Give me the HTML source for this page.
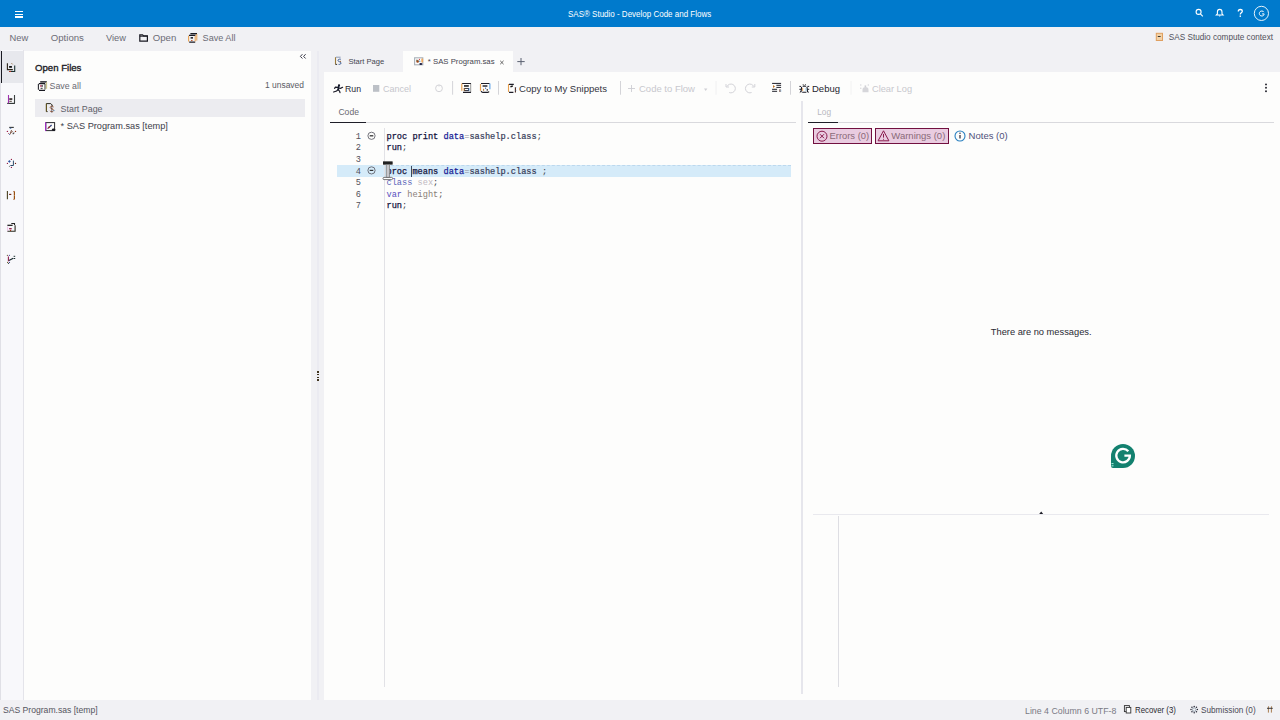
<!DOCTYPE html>
<html><head><meta charset="utf-8">
<style>
*{margin:0;padding:0;box-sizing:border-box}
html,body{width:1280px;height:720px;overflow:hidden;background:#f1f1f4;font-family:"Liberation Sans",sans-serif;color:#444}
.a{position:absolute;white-space:nowrap;line-height:1}
.b{position:absolute}
svg.i{position:absolute;overflow:visible}
.code{position:absolute;left:386.5px;top:131.9px;font-family:"Liberation Mono",monospace;font-size:8.65px;line-height:11.56px;white-space:pre;color:#1c1c58}
.ln{position:absolute;left:330px;width:31px;text-align:right;top:131.9px;font-family:"Liberation Mono",monospace;font-size:8.65px;line-height:11.56px;white-space:pre;color:#50505a}
.k{color:#14143e;-webkit-text-stroke:0.25px #14143e}
.d{color:#1a1e96;-webkit-text-stroke:0.25px #1a1e96}
.e{color:#8a8a9a}
.sc{color:#3a3a48}
.s{color:#353a58;-webkit-text-stroke:0.2px #353a58}
</style></head><body>
<!-- ===== header ===== -->
<div class="b" style="left:0;top:0;width:1280px;height:26.5px;background:#007acc"></div>
<div class="b" style="left:15px;top:10.8px;width:8px;height:1.4px;background:#fff"></div>
<div class="b" style="left:15px;top:13.5px;width:8px;height:1.4px;background:#fff"></div>
<div class="b" style="left:15px;top:16.2px;width:8px;height:1.4px;background:#fff"></div>
<div class="a" style="left:568px;top:10px;font-size:8.6px;color:#fff;transform:scaleX(0.93);transform-origin:0 0">SAS® Studio - Develop Code and Flows</div>
<svg class="i" style="left:0;top:0" width="1280" height="27">
  <circle cx="1198.6" cy="11.9" r="2.5" fill="none" stroke="#fff" stroke-width="1.1"/>
  <line x1="1200.4" y1="13.8" x2="1202.8" y2="16.3" stroke="#fff" stroke-width="1.1"/>
  <path d="M1219.7 9.4c-1.5 0-2.3 1.2-2.3 2.6v1.8l-1.1 1.2h6.8l-1.1-1.2v-1.8c0-1.4-0.8-2.6-2.3-2.6z" fill="none" stroke="#fff" stroke-width="1.1"/>
  <path d="M1218.6 15.4h2.2l-1.1 1.3z" fill="#fff"/>
  <path d="M1238.3 11.5c0-1.3 0.9-2 2-2s2 0.7 2 1.8c0 1.5-2 1.6-2 3.2" fill="none" stroke="#fff" stroke-width="1.3"/>
  <rect x="1239.6" y="15.5" width="1.4" height="1.4" fill="#fff"/>
  <circle cx="1261.4" cy="13.4" r="7.1" fill="none" stroke="#fff" stroke-width="0.9"/>
  <path d="M1263.9 12.1c-0.4-0.7-1.1-1.1-2-1.1-1.5 0-2.6 1-2.6 2.5s1.1 2.5 2.6 2.5c1.3 0 2.2-0.8 2.2-2.1h-2" fill="none" stroke="#fff" stroke-width="0.95"/>
</svg>

<!-- ===== app toolbar ===== -->
<div class="a" style="left:9.6px;top:33.1px;font-size:9.4px;color:#6c6c76">New</div>
<div class="a" style="left:50.8px;top:33.1px;font-size:9.6px;color:#6c6c76">Options</div>
<div class="a" style="left:106px;top:33.9px;font-size:9.3px;color:#6c6c76">View</div>
<div class="a" style="left:152.8px;top:33.1px;font-size:9.6px;color:#6c6c76">Open</div>
<div class="a" style="left:202.6px;top:34px;font-size:9.1px;color:#6c6c76">Save All</div>
<div class="a" style="left:1168.8px;top:34px;font-size:8.2px;color:#50505a">SAS Studio compute context</div>
<svg class="i" style="left:0;top:0" width="1280" height="50">
  <!-- folder -->
  <path d="M139.8 34.8h2.8l1 1h3.8v5.4h-7.6z" fill="none" stroke="#1a1a22" stroke-width="1.2"/>
  <line x1="139.8" y1="36.2" x2="147.4" y2="36.2" stroke="#1a1a22" stroke-width="1"/>
  <!-- save all -->
  <rect x="190.4" y="33" width="6.6" height="1.4" fill="#1a1a22"/>
  <line x1="196.8" y1="34" x2="196.8" y2="40.6" stroke="#e8a050" stroke-width="1"/>
  <path d="M189 35.4h6.4M189.2 42.2h6" stroke="#1a1a22" stroke-width="1.2"/>
  <line x1="188.6" y1="35.8" x2="188.6" y2="41.6" stroke="#e8a050" stroke-width="1.1"/>
  <line x1="195.2" y1="35.8" x2="195.2" y2="41.4" stroke="#e8a050" stroke-width="1"/>
  <rect x="190.6" y="37.1" width="2.4" height="1.5" fill="#1a1a22"/>
  <rect x="191.1" y="40" width="1.4" height="1" fill="#c05020"/>
  <!-- compute context -->
  <rect x="1156.3" y="33.3" width="6.2" height="7.2" fill="#f3d2a6" stroke="#e0a060" stroke-width="1"/>
  <line x1="1157.8" y1="36.5" x2="1160.6" y2="36.5" stroke="#333" stroke-width="1"/>
</svg>

<!-- ===== activity bar ===== -->
<div class="b" style="left:0;top:50px;width:23.5px;height:650px;background:#f8f8fb;border-right:1px solid #e4e4ea"></div>
<div class="b" style="left:0;top:50px;width:1px;height:650px;background:#e0e0e6"></div>
<div class="b" style="left:2px;top:51px;width:21px;height:32px;background:#e7e8ed"></div>
<div class="b" style="left:1px;top:51px;width:1.2px;height:32px;background:#1a1a22"></div>
<svg class="i" style="left:0;top:0" width="24" height="280">
  <!-- 1 open files -->
  <path d="M7.4 63.2v6.4h5.4" fill="none" stroke="#2a2418" stroke-width="1.1"/>
  <rect x="9.1" y="66" width="2.8" height="1.8" fill="#111"/>
  <path d="M11.6 63.3l1 1" stroke="#8a6030" stroke-width="1"/>
  <path d="M14.7 65.6v5.9H9.1" fill="none" stroke="#1a3030" stroke-width="1.1"/>
  <line x1="9.1" y1="71.5" x2="11" y2="71.5" stroke="#b03020" stroke-width="1.1"/>
  <!-- 2 -->
  <path d="M7.2 103.4h7.7" stroke="#2a3030" stroke-width="1.1"/>
  <line x1="8.5" y1="95" x2="8.5" y2="103.4" stroke="#a030b0" stroke-width="1.1"/>
  <line x1="14.5" y1="95" x2="14.5" y2="103.4" stroke="#3a4040" stroke-width="1.1"/>
  <rect x="9.3" y="98.3" width="3" height="1.5" fill="#1a1010"/>
  <line x1="9.3" y1="101.3" x2="11.8" y2="101.3" stroke="#3a2a20" stroke-width="0.9"/>
  <!-- 3 -->
  <path d="M9.2 127.4h4.6" stroke="#333" stroke-width="1.1"/>
  <path d="M9.8 128.5l1.6-0.4" stroke="#3a6ab0" stroke-width="0.9"/>
  <path d="M10 134.4l1.4-4 1 1.4-1 1" fill="none" stroke="#7a5040" stroke-width="1"/>
  <path d="M12.7 134.2l1.6-1.6" stroke="#444" stroke-width="1.1"/>
  <circle cx="7.4" cy="131.4" r="0.7" fill="#9a1a4a"/>
  <circle cx="15.5" cy="131.4" r="0.7" fill="#8a2a10"/>
  <circle cx="8.5" cy="133.4" r="0.5" fill="#a04050"/>
  <circle cx="9.5" cy="134.4" r="0.5" fill="#4060a0"/>
  <!-- 4 -->
  <circle cx="11.4" cy="159.4" r="0.65" fill="#901a40"/>
  <circle cx="7.4" cy="163.4" r="0.65" fill="#901a40"/>
  <circle cx="15.5" cy="163.4" r="0.65" fill="#7a2010"/>
  <circle cx="11.4" cy="167.4" r="0.65" fill="#901a40"/>
  <path d="M8.2 161.4h2.4M9.4 160.3v2.3" stroke="#2a50a0" stroke-width="1"/>
  <path d="M13.4 160.6v4.9H10.4" fill="none" stroke="#2a4a6a" stroke-width="1"/>
  <circle cx="9.4" cy="166.2" r="0.5" fill="#506050"/>
  <!-- 5 -->
  <line x1="7.4" y1="191" x2="7.4" y2="199.2" stroke="#4a4020" stroke-width="1.1"/>
  <line x1="9.1" y1="194.4" x2="11.3" y2="194.4" stroke="#6a2010" stroke-width="1.1"/>
  <path d="M13.6 191.2l0.8 0.8v3.2M13.6 199.6l0.8-0.8v-3.2" fill="none" stroke="#9a5010" stroke-width="1.2"/>
  <!-- 6 -->
  <path d="M7.4 225.3h5.2" stroke="#111" stroke-width="1.2"/>
  <path d="M11.3 223.5h3.2v1.6" fill="none" stroke="#222" stroke-width="1.1"/>
  <path d="M15.1 225.2v6h-7.7" fill="none" stroke="#2a2a20" stroke-width="1.1"/>
  <line x1="7.6" y1="226.5" x2="7.6" y2="231" stroke="#e8b0e0" stroke-width="0.8"/>
  <rect x="9.1" y="228.1" width="2.6" height="1.2" fill="#8a1040"/>
  <circle cx="10.6" cy="230.4" r="0.6" fill="#a03010"/>
  <!-- 7 -->
  <path d="M8.4 256.5v4.8" stroke="#902050" stroke-width="1.1"/>
  <path d="M9 260.6l4.2-2.4" stroke="#1a2a30" stroke-width="1.1"/>
  <circle cx="7.4" cy="255.3" r="0.65" fill="#6a5a30"/>
  <circle cx="9.4" cy="255.3" r="0.65" fill="#5040a0"/>
  <circle cx="7.6" cy="262.4" r="0.6" fill="#6a5a30"/>
  <circle cx="9.5" cy="262.4" r="0.6" fill="#5040a0"/>
  <circle cx="8.5" cy="263.5" r="0.6" fill="#204030"/>
  <path d="M13.6 256.3h1.6M13.6 258.5h1.6" stroke="#1a3030" stroke-width="1"/>
</svg>

<!-- ===== left panel ===== -->
<div class="b" style="left:24px;top:51px;width:287px;height:649px;background:#fdfdfc"></div>
<div class="a" style="left:35px;top:62.6px;font-size:9.6px;color:#1e1e28;-webkit-text-stroke:0.35px #1e1e28">Open Files</div>
<div class="a" style="left:49.6px;top:82.4px;font-size:8.8px;color:#6a6a72">Save all</div>
<div class="a" style="left:265px;top:81.3px;font-size:8.45px;color:#5a5a64">1 unsaved</div>
<div class="b" style="left:35px;top:99.4px;width:270px;height:17.5px;background:#ececf0"></div>
<div class="a" style="left:60.6px;top:104.7px;font-size:8.9px;color:#60606a">Start Page</div>
<div class="a" style="left:60.6px;top:122.4px;font-size:9.2px;color:#3c3c48">* SAS Program.sas [temp]</div>
<svg class="i" style="left:0;top:0" width="320" height="140">
  <path d="M302.4 54.2L300.4 56.4L302.4 58.5M305.6 54.2L303.6 56.4L305.6 58.5" fill="none" stroke="#3a3a48" stroke-width="1"/>
  <!-- save all -->
  <g transform="translate(-150.2,48.2)"><rect x="190.4" y="33" width="6.6" height="1.4" fill="#1a1a22"/>
  <line x1="196.8" y1="34" x2="196.8" y2="40.6" stroke="#c8c080" stroke-width="1"/>
  <path d="M189 35.4h6.4M189.2 42.2h6" stroke="#1a1a22" stroke-width="1.2"/>
  <line x1="188.6" y1="35.8" x2="188.6" y2="41.6" stroke="#2a2a30" stroke-width="1.1"/>
  <line x1="195.2" y1="35.8" x2="195.2" y2="41.4" stroke="#3a3a30" stroke-width="1"/>
  <rect x="190.4" y="37" width="1.4" height="1.5" fill="#b01040"/><rect x="191.8" y="37" width="1.2" height="1.5" fill="#1a1a22"/>
  <rect x="190.8" y="39.6" width="2" height="1" fill="#2a2a30"/></g>
  <!-- start page icon -->
  <path d="M47.6 111.6h-1.2v-8h4.4l1.4 1.4v1" fill="none" stroke="#2a2a20" stroke-width="1"/>
  <line x1="46.4" y1="103.6" x2="46.4" y2="111.6" stroke="#6a5a20" stroke-width="1"/>
  <path d="M53.6 107c-0.4-0.5-1-0.8-1.8-0.8-1 0-1.6 0.6-1.6 1.3 0 1.6 3.4 1 3.4 2.8 0 0.8-0.7 1.4-1.8 1.4-0.8 0-1.5-0.3-1.9-0.9" fill="none" stroke="#a05a30" stroke-width="1"/>
  <line x1="51.8" y1="105.6" x2="51.8" y2="112.6" stroke="#3a3040" stroke-width="0.7"/>
  <circle cx="54" cy="110.6" r="0.6" fill="#50a0e0"/>
  <!-- sas program icon -->
  <rect x="45.8" y="122.6" width="8.8" height="8" fill="none" stroke="#2a2a30" stroke-width="1"/>
  <line x1="45.6" y1="122.2" x2="45.6" y2="131" stroke="#a030c0" stroke-width="1.2"/>
  <path d="M47.6 128.6l4-3.6" stroke="#3a2a50" stroke-width="1.1"/>
  <circle cx="49" cy="127.4" r="0.8" fill="#b03030"/>
  <circle cx="51" cy="125.6" r="0.7" fill="#4070c0"/>
  <ellipse cx="53.6" cy="129.8" rx="1.8" ry="1.2" fill="#1a1a22"/>
</svg>

<!-- ===== splitter ===== -->
<div class="b" style="left:311px;top:51px;width:13px;height:649px;background:#f1f1f4"></div>
<div class="b" style="left:317px;top:51px;width:2px;height:649px;background:#ebebf1"></div>
<div class="b" style="left:317.2px;top:371.2px;width:1.8px;height:2px;background:#40341e"></div>
<div class="b" style="left:317.2px;top:374.2px;width:1.8px;height:1.2px;background:#40341e"></div>
<div class="b" style="left:317.2px;top:376.8px;width:1.8px;height:1.2px;background:#40341e"></div>
<div class="b" style="left:317.2px;top:379.2px;width:1.8px;height:2px;background:#40341e"></div>

<!-- ===== main tabs ===== -->
<div class="b" style="left:403px;top:51.2px;width:110px;height:21px;background:#fdfdfc"></div>
<div class="a" style="left:348.4px;top:57.6px;font-size:7.6px;color:#45454f">Start Page</div>
<div class="a" style="left:427.8px;top:58.2px;font-size:7.75px;color:#45454f">* SAS Program.sas</div>
<svg class="i" style="left:0;top:0" width="540" height="72">
  <path d="M335.5 57.2v7.2" stroke="#9a7a3a" stroke-width="1.1"/>
  <path d="M336 57.2h4.6" stroke="#8090b0" stroke-width="0.9"/>
  <path d="M335.5 64.4h1.6" stroke="#333" stroke-width="1"/>
  <path d="M340.8 59.2h-1.4c-0.8 0-1.4 0.6-1.4 1.3 0 1.5 3 1 3 2.6 0 0.7-0.6 1.3-1.4 1.3h-1" fill="none" stroke="#3a5a90" stroke-width="0.95"/>
  <circle cx="340.4" cy="61.4" r="0.6" fill="#9a6a40"/>
  <rect x="414.6" y="57.8" width="8.2" height="7" fill="none" stroke="#a8b0b8" stroke-width="1.1"/>
  <circle cx="417.6" cy="61.4" r="1.3" fill="#9a4a20"/>
  <circle cx="416.9" cy="60.3" r="0.7" fill="#6a7050"/>
  <circle cx="419.4" cy="59.4" r="0.6" fill="#d04848"/>
  <circle cx="419.8" cy="61.3" r="0.7" fill="#4a98d0"/>
  <rect x="421.3" y="58.6" width="1.8" height="3.8" fill="#f0a860"/>
  <ellipse cx="420.8" cy="64" rx="1.5" ry="0.9" fill="#1a1a40"/>
  <path d="M500.2 60.8l3.4 3.4M503.6 60.8l-3.4 3.4" stroke="#555" stroke-width="0.9"/>
  <path d="M521 58v7.2M517.3 61.6h7.4" stroke="#5a6070" stroke-width="1"/>
</svg>

<!-- ===== main panel ===== -->
<div class="b" style="left:324px;top:72px;width:956px;height:628px;background:#fdfdfc"></div>

<!-- toolbar -->
<div class="a" style="left:345px;top:83.7px;font-size:9.8px;color:#2a2a36;transform:scaleX(0.89);transform-origin:0 0">Run</div>
<div class="a" style="left:383.2px;top:83.7px;font-size:9.8px;color:#c6c6cc;transform:scaleX(0.918);transform-origin:0 0">Cancel</div>
<div class="a" style="left:519.2px;top:83.7px;font-size:9.8px;color:#34343e;transform:scaleX(0.973);transform-origin:0 0">Copy to My Snippets</div>
<div class="a" style="left:639px;top:83.7px;font-size:9.8px;color:#c8c8ce;transform:scaleX(0.969);transform-origin:0 0">Code to Flow</div>
<div class="a" style="left:811.7px;top:83.7px;font-size:9.8px;color:#24242e;transform:scaleX(0.969);transform-origin:0 0">Debug</div>
<div class="a" style="left:871.7px;top:83.7px;font-size:9.8px;color:#c8c8ce;transform:scaleX(0.942);transform-origin:0 0">Clear Log</div>
<svg class="i" style="left:0;top:0" width="1280" height="100">
  <!-- run -->
  <circle cx="339" cy="85.3" r="1.15" fill="#1a1a26"/>
  <path d="M338.7 86.6l-0.5 3" stroke="#14203a" stroke-width="1.8" stroke-linecap="round"/>
  <path d="M338.2 87.4l-2.8-0.3-0.8 1.2M338.6 88l2 0.4 2-1.1M338 89.6l-1.4 1.4-3 1M338.4 89.8l1.2 1.4 0.4 1.4" fill="none" stroke="#1a1a26" stroke-width="1.2" stroke-linecap="round"/>
  <!-- cancel -->
  <rect x="373" y="85" width="6.3" height="6.8" fill="#bcc0c6"/>
  <!-- spinner -->
  <circle cx="439" cy="88.3" r="3.4" fill="none" stroke="#d4d4d8" stroke-width="1"/>
  <line x1="439" y1="84.9" x2="439" y2="86.5" stroke="#d4d4d8" stroke-width="1"/>
  <!-- separators -->
  <line x1="452.6" y1="81" x2="452.6" y2="94.7" stroke="#cfcfd4" stroke-width="0.9"/>
  <line x1="498.5" y1="81" x2="498.5" y2="94.7" stroke="#cfcfd4" stroke-width="0.9"/>
  <line x1="620.5" y1="81" x2="620.5" y2="94.7" stroke="#cfcfd4" stroke-width="0.9"/>
  <line x1="716" y1="81" x2="716" y2="94.7" stroke="#eeeef0" stroke-width="0.9"/>
  <line x1="790.5" y1="81" x2="790.5" y2="94.7" stroke="#cfcfd4" stroke-width="0.9"/>
  <line x1="851" y1="81" x2="851" y2="94.7" stroke="#f0f0f2" stroke-width="0.9"/>
  <!-- icon1 -->
  <path d="M462 83.5h9M463 92.4h8" stroke="#1e1e28" stroke-width="1.1"/>
  <line x1="461.8" y1="83.6" x2="461.8" y2="90.8" stroke="#e8a050" stroke-width="1.2"/>
  <line x1="470.7" y1="83.5" x2="470.7" y2="92.4" stroke="#555" stroke-width="0.6"/>
  <rect x="464" y="85.2" width="4.8" height="1.5" fill="#111"/>
  <rect x="464.4" y="88.4" width="4.2" height="2.2" fill="none" stroke="#1e1e28" stroke-width="0.9"/>
  <line x1="464" y1="88.2" x2="464" y2="90.8" stroke="#e8a050" stroke-width="0.9"/>
  <line x1="469" y1="88.2" x2="469" y2="90.8" stroke="#4a90e0" stroke-width="0.9"/>
  <!-- icon2 -->
  <path d="M481 83.5h8.6M482.2 92.4h6.4M481 91.2l1.2 1.2" fill="none" stroke="#1e1e28" stroke-width="1.1"/>
  <line x1="480.5" y1="84" x2="480.5" y2="90.8" stroke="#e8a050" stroke-width="1.2"/>
  <line x1="489.9" y1="83.5" x2="489.9" y2="89.2" stroke="#5aa0e8" stroke-width="1.1"/>
  <rect x="482.6" y="85.3" width="4.8" height="1.4" fill="#1a1a22"/>
  <path d="M483.6 90.8v-2" stroke="#b07030" stroke-width="1"/>
  <circle cx="485.6" cy="88.2" r="0.6" fill="#2050b0"/>
  <rect x="486.6" y="89.2" width="1.4" height="1.4" fill="#333"/>
  <rect x="488.3" y="91" width="0.9" height="1.6" fill="#444"/>
  <!-- copy -->
  <path d="M509 84.4h4.8M509 92.4h4.4" stroke="#1e1e28" stroke-width="1.1"/>
  <line x1="508.5" y1="84" x2="508.5" y2="91.9" stroke="#e8a050" stroke-width="1.1"/>
  <path d="M510.6 87.2c0.4-0.9 1.2-1.2 2.4-1" stroke="#111" stroke-width="1.3" fill="none"/>
  <line x1="515.4" y1="87.3" x2="515.4" y2="92.4" stroke="#4a2a20" stroke-width="1.1"/>
  <circle cx="516" cy="87.6" r="0.4" fill="#4a90e0"/>
  <circle cx="516" cy="90.5" r="0.4" fill="#4a90e0"/>
  <!-- + code to flow -->
  <path d="M631.5 85v7M628 88.5h7" stroke="#cdcdd2" stroke-width="0.9"/>
  <path d="M704 88.5h3.4l-1.7 2.4z" fill="#d0d0d5"/>
  <!-- undo redo -->
  <path d="M727 86.5a4.4 4.4 0 1 1 2.2 6" fill="none" stroke="#d3d3d8" stroke-width="1"/>
  <path d="M726 84v3h3" fill="none" stroke="#d3d3d8" stroke-width="1"/>
  <path d="M753.8 86.5a4.4 4.4 0 1 0 -2.2 6" fill="none" stroke="#d3d3d8" stroke-width="1"/>
  <path d="M754.8 84v3h-3" fill="none" stroke="#d3d3d8" stroke-width="1"/>
  <!-- format -->
  <path d="M772.1 83.4h9M776.4 85.3h4.7M776.4 87.4h4.7M772.1 89.3h5M772.1 91.3h5" stroke="#1e1e28" stroke-width="1"/>
  <path d="M773 85l2 1.5-2 1.5z" fill="#c07020"/>
  <path d="M780 89.3v2.6" stroke="#5a3020" stroke-width="1.1"/>
  <line x1="780.9" y1="89.6" x2="780.9" y2="91.8" stroke="#80c0f0" stroke-width="0.6"/>
  <!-- debug -->
  <path d="M802.6 86.2h3.6M801.6 87l-0.6 5.2M807 87l0.6 5.2M802.2 92.2h4.2" fill="none" stroke="#1e1e28" stroke-width="1.1"/>
  <path d="M803 84.2l0.8 1.4M805.6 84.2l-0.8 1.4" stroke="#333" stroke-width="0.9"/>
  <path d="M799.4 86.4h1.8M807.4 86.4h1.8M799.4 89.3h2M807.2 89.3h2M799.8 92.4l1.4-1.2M808.8 92.4l-1.4-1.2" stroke="#1e1e28" stroke-width="1"/>
  <line x1="802.6" y1="88" x2="802.6" y2="91" stroke="#e09040" stroke-width="0.8"/>
  <line x1="806" y1="88" x2="806" y2="91" stroke="#80c0e0" stroke-width="0.8"/>
  <!-- clear log -->
  <path d="M862.5 92.3h6v-2.6c0-1.8-1.2-2.8-3-2.8s-3 1-3 2.8z" fill="#d6d6da"/>
  <rect x="864.6" y="85.4" width="1.6" height="1.6" fill="#d0d0d4"/>
  <circle cx="860.8" cy="85" r="0.7" fill="#d6d6da"/>
  <circle cx="860.8" cy="88.3" r="0.7" fill="#d6d6da"/>
  <circle cx="868.3" cy="85" r="0.7" fill="#d6d6da"/>
  <!-- kebab -->
  <circle cx="1266" cy="84.4" r="0.95" fill="#1e1e28"/>
  <circle cx="1266" cy="87.8" r="0.95" fill="#1e1e28"/>
  <circle cx="1266" cy="91.2" r="0.95" fill="#1e1e28"/>
</svg>

<!-- code tab -->
<div class="a" style="left:338.4px;top:107.7px;font-size:8.6px;color:#6a6a72">Code</div>
<div class="b" style="left:330px;top:121.8px;width:466px;height:1px;background:#d9d9dd"></div>
<div class="b" style="left:330px;top:121.6px;width:36.2px;height:1.6px;background:#1e1e28"></div>

<!-- editor -->
<div class="b" style="left:337px;top:165px;width:454px;height:11.6px;background:#d5ebf9"></div>
<div class="b" style="left:386px;top:165px;width:405px;height:0;border-top:1px dashed #bcd8ee"></div>
<div class="b" style="left:384px;top:128px;width:1px;height:559px;background:#e2e2e6"></div>
<div class="ln">1
2
3
4
5
6
7</div>
<svg class="i" style="left:0;top:0" width="400" height="200">
  <circle cx="371.5" cy="135.8" r="3.6" fill="none" stroke="#50505a" stroke-width="0.8"/>
  <line x1="369.7" y1="135.8" x2="373.3" y2="135.8" stroke="#333" stroke-width="1.3"/>
  <circle cx="371.5" cy="170.4" r="3.6" fill="none" stroke="#50505a" stroke-width="0.8"/>
  <line x1="369.7" y1="170.4" x2="373.3" y2="170.4" stroke="#333" stroke-width="1.2"/>
</svg>
<div class="code"><span class="k">proc</span> <span class="k">print</span> <span class="d">data</span><span class="e">=</span><span class="s">sashelp.class</span><span class="sc">;</span>
<span class="k">run</span><span class="sc">;</span>

<span class="k">proc</span> <span class="k">means</span> <span class="d">data</span><span class="e">=</span><span class="s">sashelp.class</span> <span class="sc">;</span>
<span style="color:#5a62b8">class</span> <span style="color:#c0b8c0">sex</span><span class="sc">;</span>
<span style="color:#5a50c0">var</span> <span style="color:#8a8078">height</span><span style="color:#555">;</span>
<span class="k">run</span><span class="sc">;</span></div>
<!-- caret and I-beam -->
<div class="b" style="left:411.2px;top:166px;width:1px;height:10.6px;background:#3a4a60"></div>
<svg class="i" style="left:0;top:0" width="400" height="200">
  <rect x="383" y="161.4" width="9.6" height="3.2" fill="#111"/>
  <line x1="383" y1="163" x2="392.6" y2="163" stroke="#555" stroke-width="0.5"/>
  <rect x="386.2" y="164.6" width="3.4" height="12.8" fill="#c8c8cc" stroke="#777" stroke-width="0.7"/>
  <rect x="383" y="177.4" width="9.6" height="2.2" rx="1" fill="#fff" stroke="#555" stroke-width="0.8"/>
</svg>

<!-- divider -->
<div class="b" style="left:801.2px;top:101px;width:1.6px;height:593px;background:#e6e6ec"></div>

<!-- log tab -->
<div class="a" style="left:817.2px;top:108.2px;font-size:8.3px;color:#b8b8c0">Log</div>
<div class="b" style="left:808px;top:121.8px;width:466px;height:1px;background:#d9d9dd"></div>
<div class="b" style="left:808px;top:121.6px;width:30px;height:1.6px;background:#1e1e28"></div>

<!-- badges -->
<div class="b" style="left:813px;top:128px;width:58.7px;height:16px;background:#e9cce0;border:1.2px solid #721040"></div>
<div class="b" style="left:874.8px;top:128px;width:74px;height:16px;background:#e9cce0;border:1.2px solid #721040"></div>
<div class="a" style="left:829.5px;top:131.3px;font-size:9.4px;color:#8a6a78">Errors (0)</div>
<div class="a" style="left:891.3px;top:131.3px;font-size:9.5px;color:#8a6a78">Warnings (0)</div>
<div class="a" style="left:968.6px;top:131.3px;font-size:9.5px;color:#50507a">Notes (0)</div>
<svg class="i" style="left:0;top:0" width="1280" height="150">
  <circle cx="822" cy="136.2" r="5" fill="none" stroke="#8a1c4e" stroke-width="1"/>
  <path d="M820 134.2l4 4M824 134.2l-4 4" stroke="#8a1c4e" stroke-width="1"/>
  <path d="M883.5 130.8l5.4 10h-10.8z" fill="none" stroke="#8a1c4e" stroke-width="1"/>
  <path d="M883.5 134v3.6" stroke="#8a1c4e" stroke-width="1"/>
  <circle cx="883.5" cy="139.2" r="0.5" fill="#8a1c4e"/>
  <circle cx="960" cy="136" r="5" fill="none" stroke="#2a80c0" stroke-width="1.1"/>
  <path d="M960 135v3.6" stroke="#223" stroke-width="1.2"/>
  <circle cx="960" cy="133.2" r="0.7" fill="#223"/>
</svg>

<div class="a" style="left:990.8px;top:328.4px;font-size:9.3px;color:#2a2a34">There are no messages.</div>

<!-- grammarly -->
<div class="b" style="left:1111px;top:444px;width:24px;height:24px;background:#13816f;border-radius:12px 12px 12px 2px"></div>
<svg class="i" style="left:0;top:0" width="1280" height="480">
  <path d="M1128.3 451.2A6.8 6.8 0 1 0 1129.9 455.6H1124.4" fill="none" stroke="#fff" stroke-width="2.3"/>
  <rect x="1111.5" y="463.2" width="2" height="0.9" fill="#bfe"/>
  <rect x="1111.5" y="465.4" width="2" height="0.9" fill="#bfe"/>
</svg>

<!-- lower panel -->
<div class="b" style="left:813px;top:514px;width:456px;height:1px;background:#e9e9ee"></div>
<svg class="i" style="left:0;top:0" width="1280" height="520">
  <path d="M1039.2 514l2-2.6 2 2.6z" fill="#1e1e28"/>
</svg>
<div class="b" style="left:838px;top:516px;width:1px;height:171px;background:#dedee3"></div>

<!-- ===== status bar ===== -->
<div class="a" style="left:3px;top:706.1px;font-size:8.6px;color:#55555e">SAS Program.sas [temp]</div>
<div class="a" style="left:1025px;top:706.9px;font-size:8.8px;color:#7a7a84">Line 4 Column 6 UTF-8</div>
<div class="a" style="left:1134.8px;top:706.1px;font-size:8.7px;color:#2a2a32;transform:scaleX(0.9);transform-origin:0 0">Recover (3)</div>
<div class="a" style="left:1201px;top:706.9px;font-size:8.2px;color:#4a4a55">Submission (0)</div>
<svg class="i" style="left:0;top:0" width="1280" height="720">
  <rect x="1124.4" y="705.6" width="5" height="6" fill="none" stroke="#333" stroke-width="0.9"/>
  <rect x="1126.2" y="707.4" width="4.6" height="5.6" fill="#fff" stroke="#333" stroke-width="0.9"/>
  <circle cx="1197.40" cy="709.60" r="0.75" fill="#2a2a38"/><circle cx="1196.46" cy="711.86" r="0.75" fill="#2a2a38"/><circle cx="1194.20" cy="712.80" r="0.75" fill="#2a2a38"/><circle cx="1191.94" cy="711.86" r="0.75" fill="#2a2a38"/><circle cx="1191.00" cy="709.60" r="0.75" fill="#2a2a38"/><circle cx="1191.94" cy="707.34" r="0.75" fill="#2a2a38"/><circle cx="1194.20" cy="706.40" r="0.75" fill="#2a2a38"/><circle cx="1196.46" cy="707.34" r="0.75" fill="#2a2a38"/><circle cx="1194.2" cy="709.6" r="1.8" fill="none" stroke="#8090a0" stroke-width="0.8"/>
  <path d="M1268.4 712.6v-5.6q0-0.6 0.6-0.6M1271.4 712.6v-5.6q0-0.6 0.6-0.6" fill="none" stroke="#a07040" stroke-width="0.9"/><path d="M1267 708.3h5.8" stroke="#2a2a30" stroke-width="0.9"/>
</svg>
</body></html>
